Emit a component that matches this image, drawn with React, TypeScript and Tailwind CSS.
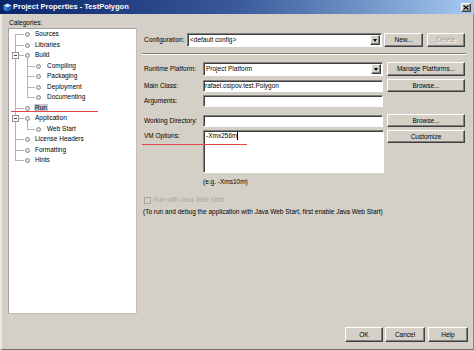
import React from "react";

const raised =
  "bg-[#d4d0c8] border border-t-white border-l-white border-r-[#404040] border-b-[#404040] shadow-[inset_-1px_-1px_0_#808080]";
const sunken =
  "bg-white border border-t-[#808080] border-l-[#808080] border-r-white border-b-white shadow-[inset_1px_1px_0_#404040]";

function Btn({
  children,
  className,
  disabled,
}: {
  children: React.ReactNode;
  className: string;
  disabled?: boolean;
}) {
  return (
    <div className={`${raised} ${className} flex items-center justify-center shrink-0`}>
      <span
        className={
          disabled
            ? "text-[#a09c94] [text-shadow:1px_1px_0_#ffffff]"
            : "text-black"
        }
      >
        {children}
      </span>
    </div>
  );
}

function Combo({ text, className, pl }: { text: string; className: string; pl: string }) {
  return (
    <div className={`${sunken} ${className} flex items-center shrink-0`}>
      <span className={`${pl} flex-1 whitespace-nowrap`}>{text}</span>
      <div className={`${raised} w-[10px] h-[10px] mr-[1px] flex items-center justify-center`}>
        <div className="w-0 h-0 border-l-[2.5px] border-r-[2.5px] border-t-[3px] border-l-transparent border-r-transparent border-t-black" />
      </div>
    </div>
  );
}

type Row = {
  t: string;
  l: 0 | 1;
  exp?: boolean;
  lastChild?: boolean;
  last?: boolean;
  sel?: boolean;
};

const rows: Row[] = [
  { t: "Sources", l: 0 },
  { t: "Libraries", l: 0 },
  { t: "Build", l: 0, exp: true },
  { t: "Compiling", l: 1 },
  { t: "Packaging", l: 1 },
  { t: "Deployment", l: 1 },
  { t: "Documenting", l: 1, lastChild: true },
  { t: "Run", l: 0, sel: true },
  { t: "Application", l: 0, exp: true },
  { t: "Web Start", l: 1, lastChild: true },
  { t: "License Headers", l: 0 },
  { t: "Formatting", l: 0 },
  { t: "Hints", l: 0, last: true },
];

function Node() {
  return <div className="w-[5px] h-[5px] rounded-full border border-[#8c8c8c] bg-[#e4e4e4]" />;
}

function TreeRow({ r, i }: { r: Row; i: number }) {
  const line = "absolute bg-[#b4b4b4]";
  return (
    <div className="relative h-[10.5px] flex items-center">
      <div
        className={`${line} left-[6px] w-px ${
          i === 0 ? "top-[5px] bottom-0" : r.last ? "top-0 h-[5.5px]" : "top-0 bottom-0"
        }`}
      />
      {r.l === 0 && <div className={`${line} left-[6px] top-[5px] w-[9px] h-px`} />}
      {r.exp && (
        <>
          <div className="absolute left-[3px] top-[2px] w-[7px] h-[7px] border border-[#909090] bg-white flex items-center justify-center">
            <div className="w-[3px] h-px bg-[#404040]" />
          </div>
          <div className={`${line} left-[18px] top-[8px] bottom-0 w-px`} />
        </>
      )}
      {r.l === 1 && (
        <>
          <div
            className={`${line} left-[18px] w-px ${
              r.lastChild ? "top-0 h-[5.5px]" : "top-0 bottom-0"
            }`}
          />
          <div className={`${line} left-[18px] top-[5px] w-[8px] h-px`} />
        </>
      )}
      <div className={`absolute top-[3px] ${r.l === 0 ? "left-[16px]" : "left-[27px]"}`}>
        <Node />
      </div>
      <span
        className={`${r.l === 0 ? "ml-[25px]" : "ml-[37px]"} px-[1px] whitespace-nowrap ${
          r.sel ? "bg-[#c8c8c8]" : ""
        }`}
      >
        {r.t}
      </span>
    </div>
  );
}

export default function App() {
  return (
    <div className="relative w-[474px] h-[350px] overflow-hidden bg-[#d4d0c8] flex flex-col font-['Liberation_Sans',Arial,sans-serif] text-[6.5px] leading-[8px] text-black">
      {/* Title bar */}
      <div className="h-[14px] shrink-0 flex items-center bg-gradient-to-r from-[#0a246a] via-[#3a5a9a] to-[#a6caf0] pl-[3px] pr-[3px]">
        <svg width="9" height="9" viewBox="0 0 9 9">
          <polygon points="4.5,0.5 8.5,2.5 4.5,4.5 0.5,2.5" fill="#cfe6ff" />
          <polygon points="0.5,2.5 4.5,4.5 4.5,8.5 0.5,6.5" fill="#3b8ad8" />
          <polygon points="8.5,2.5 4.5,4.5 4.5,8.5 8.5,6.5" fill="#1c5fae" />
        </svg>
        <span className="ml-[1px] font-bold text-white text-[7.5px]">
          Project Properties - TestPolygon
        </span>
        <div className={`ml-auto ${raised} w-[10px] h-[9px] flex items-center justify-center`}>
          <svg width="6" height="5" viewBox="0 0 6 5">
            <path d="M0.5 0.5 L5.5 4.5 M5.5 0.5 L0.5 4.5" stroke="#000" strokeWidth="1.2" />
          </svg>
        </div>
      </div>

      {/* Body */}
      <div className="flex-1 flex flex-col border-l-[2px] border-l-[#ebe8e1] border-r border-r-[#8a8780] border-b border-b-[#6f6c66]">
        <div className="flex">
          {/* Left column */}
          <div className="ml-[6px] w-[129px] flex flex-col">
            <div className="mt-[4px] h-[10px] leading-[10px] pl-[1px]">Categories:</div>
            <div className="h-[286px] bg-white border border-[#a0a0a0] border-b-[#c4c0b8] border-r-[#c4c0b8]">
              {rows.map((r, i) => (
                <TreeRow key={r.t} r={r} i={i} />
              ))}
            </div>
          </div>

          {/* Right column */}
          <div className="ml-[5px] w-[324px] pt-[19px] flex flex-col">
            <div className="flex items-center h-[14px]">
              <span className="w-[45px] pl-[2px] shrink-0">Configuration:</span>
              <Combo text="<default config>" className="w-[195px] h-[14px]" pl="pl-[2px]" />
              <Btn className="ml-[2px] w-[39px] h-[14px]">New...</Btn>
              <Btn disabled className="ml-[4px] w-[38px] h-[14px]">
                Delete
              </Btn>
            </div>

            <div className="mt-[6px] h-[2px] border-t border-t-[#808080] border-b border-b-white" />

            <div className="mt-[7px] flex items-center h-[14px]">
              <span className="w-[61px] pl-[2px] shrink-0">Runtime Platform:</span>
              <Combo text="Project Platform" className="w-[180px] h-[14px]" pl="pl-[2px]" />
              <Btn className="ml-[4px] w-[78px] h-[14px]">Manage Platforms...</Btn>
            </div>

            <div className="mt-[3px] flex items-center h-[13px]">
              <span className="w-[61px] pl-[2px] shrink-0">Main Class:</span>
              <div className={`${sunken} w-[180px] h-[12px] flex items-center shrink-0`}>
                <span className="pl-[1px] whitespace-nowrap">rafael.osipov.test.Polygon</span>
              </div>
              <Btn className="ml-[4px] w-[78px] h-[13px]">Browse...</Btn>
            </div>

            <div className="mt-[3px] flex items-center h-[12px]">
              <span className="w-[61px] pl-[2px] shrink-0">Arguments:</span>
              <div className={`${sunken} w-[180px] h-[12px] shrink-0`} />
            </div>

            <div className="mt-[7px] flex items-center h-[13px]">
              <span className="w-[61px] pl-[2px] shrink-0">Working Directory:</span>
              <div className={`${sunken} w-[180px] h-[12px] shrink-0`} />
              <Btn className="ml-[4px] w-[78px] h-[13px]">Browse...</Btn>
            </div>

            <div className="mt-[3px] flex items-start">
              <span className="w-[61px] pl-[2px] pt-[2px] shrink-0">VM Options:</span>
              <div className={`${sunken} w-[181px] h-[43px] shrink-0 pt-[1px] pl-[2px] flex items-start`}>
                <span className="whitespace-nowrap">-Xmx256m</span>
                <span className="w-px h-[8px] bg-black" />
              </div>
              <Btn className="ml-[3px] w-[78px] h-[13px]">Customize</Btn>
            </div>

            <div className="mt-[5px] pl-[61px]">(e.g. -Xms10m)</div>

            <div className="mt-[10px] flex items-center h-[8px] pl-[2px]">
              <div className="w-[7px] h-[7px] border border-[#a8a49c] bg-[#d4d0c8] shrink-0" />
              <span className="ml-[2px] text-[#a8a49c]">Run with Java Web Start</span>
            </div>

            <div className="mt-[4px] pl-[1px] whitespace-nowrap">
              (To run and debug the application with Java Web Start, first enable Java Web Start)
            </div>
          </div>
        </div>

        {/* Bottom buttons */}
        <div className="mt-[13px] flex justify-end pr-[5px]">
          <Btn className="w-[38px] h-[15px]">OK</Btn>
          <Btn className="ml-[2px] w-[40px] h-[15px]">Cancel</Btn>
          <Btn className="ml-[3px] w-[40px] h-[15px]">Help</Btn>
        </div>
      </div>

      {/* Red annotation lines */}
      <div className="absolute left-[11px] top-[111px] w-[87px] h-px bg-[#e04848]" />
      <div className="absolute left-[142px] top-[144px] w-[105px] h-px bg-[#e04848]" />
    </div>
  );
}
